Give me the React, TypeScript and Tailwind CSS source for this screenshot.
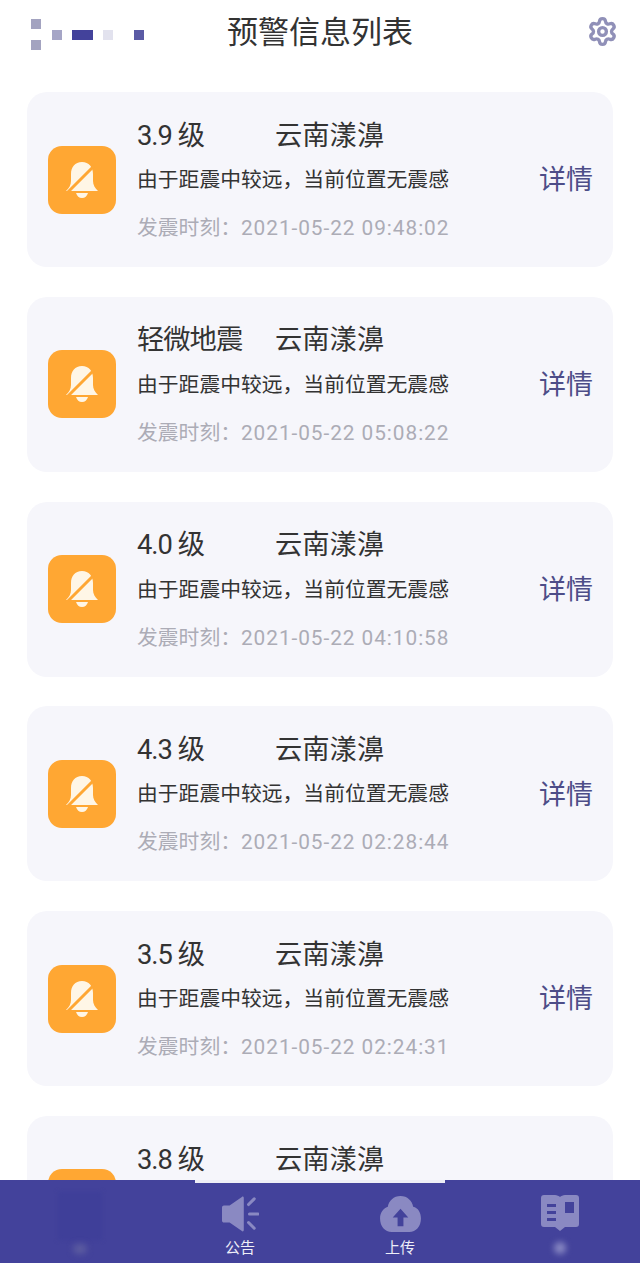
import { Settings } from "lucide-react";

const font = { fontFamily: '"Roboto", "Noto Sans CJK SC", sans-serif' };

const rows = [
  { level: "3.9 级", time: "2021-05-22 09:48:02" },
  { level: "轻微地震", time: "2021-05-22 05:08:22" },
  { level: "4.0 级", time: "2021-05-22 04:10:58" },
  { level: "4.3 级", time: "2021-05-22 02:28:44" },
  { level: "3.5 级", time: "2021-05-22 02:24:31" },
  { level: "3.8 级", time: "" },
];

function Bell() {
  return (
    <svg width="34" height="38" viewBox="0 0 34 38">
      <path d="M17 1C10 1 6 6 6 13v7c0 4-2 7-5 10h32c-3-3-5-6-5-10v-7C28 6 24 1 17 1z" fill="#fff6e6" />
      <path d="M11 32h12c-1 3-3 5-6 5s-5-2-6-5z" fill="#fff6e6" />
      <path d="M3 31L29 5" stroke="#ffa733" strokeWidth="3" />
    </svg>
  );
}

function Card({ level, time }: { level: string; time: string }) {
  return (
    <div className="mx-[27px] h-[175px] shrink-0 rounded-[20px] bg-[#f6f6fb] flex items-center pl-[21px] pr-[20px]">
      <div className="w-[68px] h-[68px] shrink-0 rounded-[14px] bg-[#ffa733] flex items-center justify-center">
        <Bell />
      </div>
      <div className="ml-[21px] pt-[4px] flex flex-col">
        <div className="flex items-center h-[36px] -mt-[3px] text-[27.3px] text-[#333333]">
          <span className="w-[138px] tracking-[-1px]">{level}</span>
          <span>云南漾濞</span>
        </div>
        <div className="mt-[12px] h-[28px] leading-[28px] text-[20.8px] text-[#333333] whitespace-nowrap">
          {time && "由于距震中较远，当前位置无震感"}
        </div>
        <div className="mt-[20px] h-[28px] leading-[28px] text-[20.8px] text-[#acacb6] whitespace-nowrap">
          {time && (
            <>
              发震时刻：<span className="tracking-[0.95px]">{time}</span>
            </>
          )}
        </div>
      </div>
      <div className="ml-auto pt-[2px] text-[27px] text-[#4d4d88]">{time && "详情"}</div>
    </div>
  );
}

function Speaker() {
  return (
    <svg width="38" height="36" viewBox="0 0 40 38" fill="#8a89c2">
      <path d="M1 12c0-1 1-2 2-2h6L22 1c1-1 2 0 2 1v34c0 1-1 2-2 1L9 28H3c-1 0-2-1-2-2z" />
      <path d="M29 9l6-6M30 19h9M29 28l6 6" stroke="#8a89c2" strokeWidth="3.2" strokeLinecap="round" fill="none" />
    </svg>
  );
}

function Cloud() {
  return (
    <svg width="41" height="37" viewBox="0 0 42 38">
      <path d="M21 0c7 0 12 5 13 11 5 1 8 6 8 12 0 8-5 14-12 14H12C5 37 0 31 0 23c0-6 3-10 8-12C9 5 14 0 21 0z" fill="#8a89c2" />
      <path d="M21 13l8 9h-5v9h-6v-9h-5z" fill="#43429b" />
    </svg>
  );
}

function Book() {
  return (
    <svg width="38" height="38" viewBox="0 0 38 38">
      <path d="M3 1h11c2 0 4 1 5 2 1-1 3-2 5-2h11c2 0 3 1 3 3v26c0 2-1 3-3 3H24l-5 4-5-4H3c-2 0-3-1-3-3V4c0-2 1-3 3-3z" fill="#8a89c2" />
      <path d="M6 10h9v3H6zM6 17h9v3H6zM6 24h9v3H6zM24 8h9v11h-9z" fill="#43429b" />
    </svg>
  );
}

export default function App() {
  return (
    <div className="w-[640px] h-[1263px] bg-white flex flex-col overflow-hidden" style={font}>
      <header className="relative h-[92px] shrink-0 flex items-start">
        <div className="ml-[31px] mt-[19px] flex items-center h-[31px]">
          <div className="flex flex-col gap-[11px]">
            <div className="w-[10px] h-[10px] bg-[#a3a3c0]" />
            <div className="w-[10px] h-[10px] bg-[#a3a3c0]" />
          </div>
          <div className="ml-[11px] w-[10px] h-[10px] bg-[#a5a5c6]" />
          <div className="ml-[10px] w-[21px] h-[10px] bg-[#43429b]" />
          <div className="ml-[10px] w-[10px] h-[10px] bg-[#e2e2ee]" />
          <div className="ml-[21px] w-[10px] h-[10px] bg-[#5b5ba5]" />
        </div>
        <h1 className="absolute left-0 right-0 top-[12px] text-center text-[31px] leading-[42px] text-[#333333]">
          预警信息列表
        </h1>
        <Settings className="absolute left-[587px] top-[16px] text-[#9090b8]" size={31} strokeWidth={2.6} />
      </header>
      <main className="flex-1 min-h-0 overflow-hidden flex flex-col gap-[29.8px]">
        {rows.map((r) => (
          <Card key={r.level} level={r.level} time={r.time} />
        ))}
      </main>
      <nav className="relative h-[83px] shrink-0 bg-[#43429b] grid grid-cols-4">
        <div className="absolute left-[195px] top-0 w-[250px] h-[3px] bg-[#eeeef6]" />
        <div className="flex flex-col items-center">
          <div className="mt-[12px] w-[44px] h-[48px] bg-[#3f3f99] blur-[2px]" />
          <div className="mt-[4px] w-[14px] h-[10px] rounded-full bg-[#5c5ca0] blur-[3px]" />
        </div>
        <div className="flex flex-col items-center">
          <div className="mt-[15px] h-[38px] flex items-center"><Speaker /></div>
          <span className="mt-[5px] text-[15px] leading-[20px] text-[#eeeef8]">公告</span>
        </div>
        <div className="flex flex-col items-center">
          <div className="mt-[15px] h-[38px] flex items-center"><Cloud /></div>
          <span className="mt-[5px] text-[15px] leading-[20px] text-[#eeeef8]">上传</span>
        </div>
        <div className="flex flex-col items-center">
          <div className="mt-[14px] h-[38px] flex items-center"><Book /></div>
          <div className="mt-[10px] w-[12px] h-[12px] rounded-full bg-[#8a8ac4] blur-[3px]" />
        </div>
      </nav>
    </div>
  );
}
